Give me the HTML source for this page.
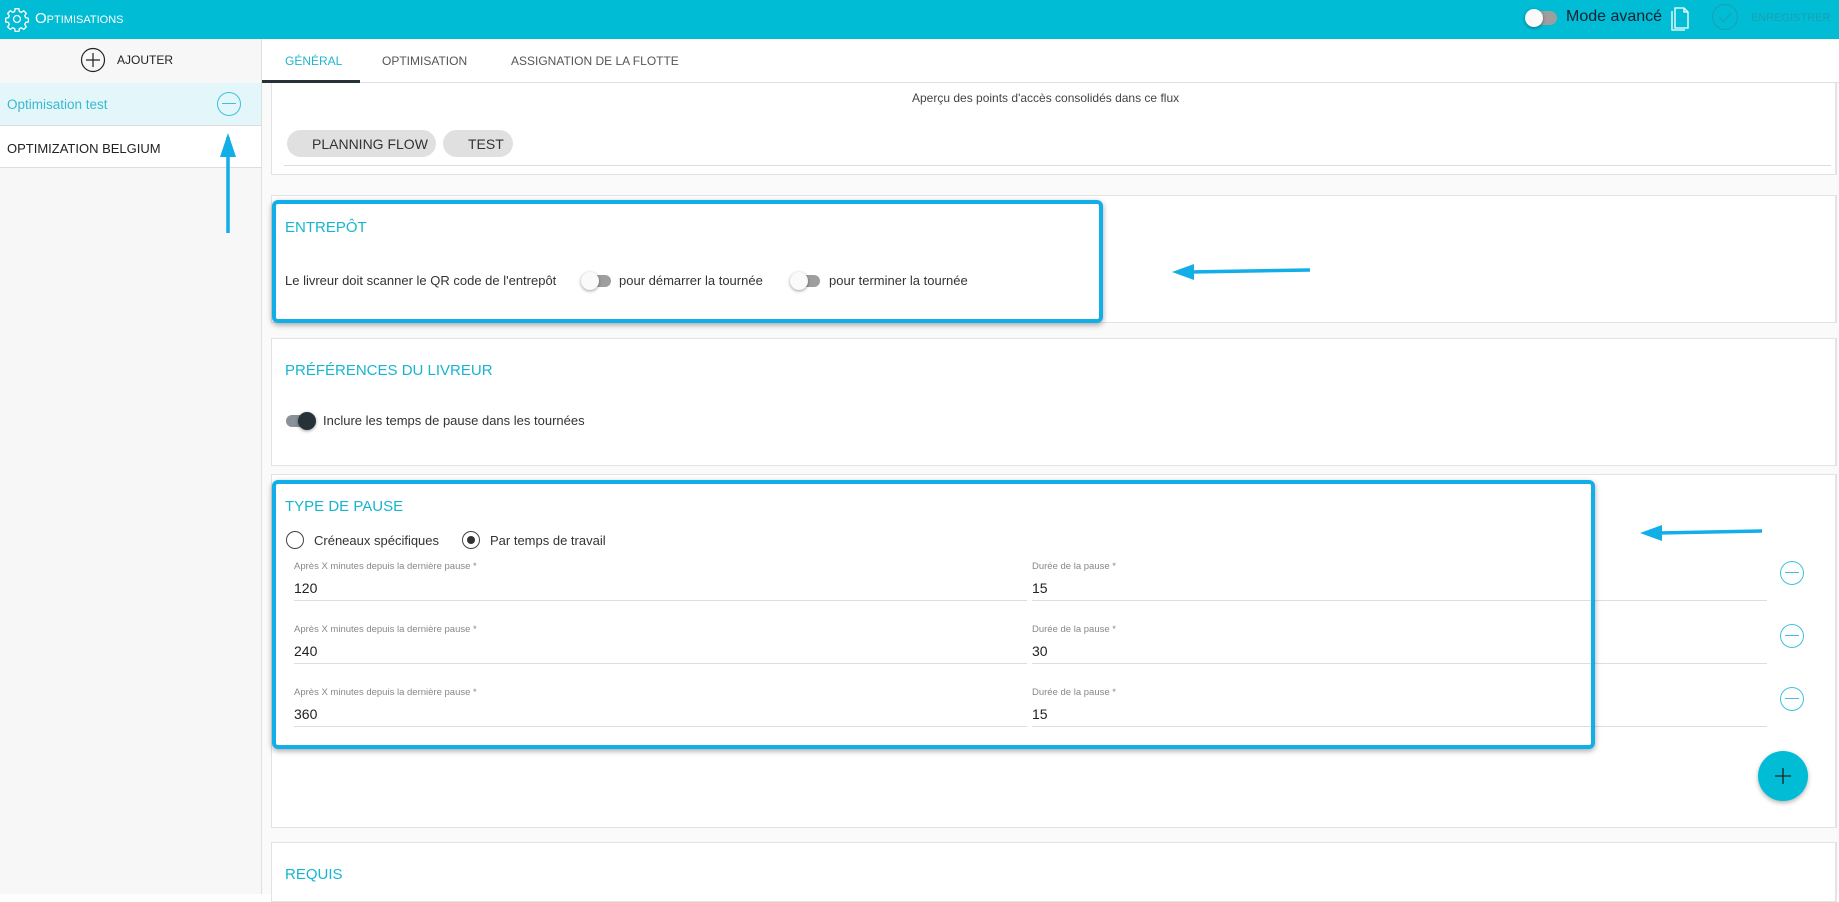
<!DOCTYPE html>
<html><head><meta charset="utf-8"><style>
*{box-sizing:border-box;margin:0;padding:0}
body{width:1839px;height:894px;overflow:hidden;background:#fff;font-family:"Liberation Sans",Arial,sans-serif;position:relative;color:#222}
.a{position:absolute}
.top{left:0;top:0;width:1839px;height:39px;background:#00bcd4}
.side{left:0;top:39px;width:262px;height:855px;background:#f7f7f7;border-right:1px solid #e0e0e0}
.main{left:262px;top:39px;width:1577px;height:855px;background:#fafafa}
.card{background:#fff;border:1px solid #e3e3e3;border-right:2px solid #e3e3e3}
.title{color:#16b5cf;font-size:15px}
.t{font-size:13px;color:#333}
.lbl{font-size:9.5px;color:#888}
.val{font-size:14px;color:#222}
.ln{height:1px;background:#ddd}
.hl{border:4px solid #12aee8;border-radius:6px;box-shadow:0 2px 6px rgba(0,0,0,.35)}
.mc{width:24px;height:24px;border:1.2px solid #3cc3db;border-radius:50%}
.mc:after{content:"";position:absolute;left:4px;right:4px;top:10px;height:1.2px;background:#3cc3db}
.tg{width:28px;height:12px;border-radius:6px;background:#9e9e9e}
.tg i{position:absolute;top:-3px;width:18px;height:18px;border-radius:50%;background:#fafafa;box-shadow:0 1px 3px rgba(0,0,0,.4)}
</style></head><body>
<div class="a top">
  <svg class="a" style="left:4px;top:6px" width="26" height="26" viewBox="0 0 24 24" fill="none" stroke="#fff" stroke-width="1.2"><circle cx="12" cy="12" r="3.2"/><path d="M10.3 2.5h3.4l.5 2.6 1.8.8 2.2-1.5 2.4 2.4-1.5 2.2.8 1.8 2.6.5v3.4l-2.6.5-.8 1.8 1.5 2.2-2.4 2.4-2.2-1.5-1.8.8-.5 2.6h-3.4l-.5-2.6-1.8-.8-2.2 1.5-2.4-2.4 1.5-2.2-.8-1.8-2.6-.5v-3.4l2.6-.5.8-1.8-1.5-2.2 2.4-2.4 2.2 1.5 1.8-.8z"/></svg>
  <div class="a" style="left:35px;top:10px;color:#fff;font-size:15px">O<span style="font-size:11px">PTIMISATIONS</span></div>
  <div class="a tg" style="left:1527px;top:11px;width:30px;height:14px;border-radius:7px"><i style="left:-2px;top:-2px"></i></div>
  <div class="a" style="left:1566px;top:8px;font-size:16px;color:#123">Mode avancé</div>
  <svg class="a" style="left:1668px;top:5px" width="24" height="28" viewBox="0 0 24 28" fill="none" stroke="#fff" stroke-width="1.3"><path d="M4 6v19h13"/><path d="M7 3h9l4 4v16H7z"/><path d="M16 3v4h4"/></svg>
  <svg class="a" style="left:1711px;top:3px" width="28" height="28" viewBox="0 0 28 28" fill="none" stroke="#1a9fb2" stroke-width="1"><circle cx="14" cy="14" r="12.5"/><path d="M8.5 14.5l4 4 7.5-8"/></svg>
  <div class="a" style="left:1751px;top:12px;font-size:11px;color:#1a9fb2">ENREGISTRER</div>
</div>
<div class="a side">
  <svg class="a" style="left:80px;top:8px" width="26" height="26" viewBox="0 0 26 26" fill="none" stroke="#222" stroke-width="1.2"><circle cx="13" cy="13" r="11.5"/><path d="M13 6v14M6 13h14"/></svg>
  <div class="a" style="left:117px;top:14px;font-size:12px;color:#222">AJOUTER</div>
  <div class="a" style="left:0;top:44px;width:261px;height:43px;background:#e3f6fa;border-bottom:1px solid #ddd"></div>
  <div class="a" style="left:7px;top:58px;font-size:13.5px;color:#3cb8cf">Optimisation test</div>
  <div class="a mc" style="left:217px;top:53px"></div>
  <div class="a" style="left:0;top:87px;width:261px;height:42px;background:#fff;border-bottom:1px solid #ddd"></div>
  <div class="a" style="left:7px;top:102px;font-size:13px;color:#222">OPTIMIZATION BELGIUM</div>
  <svg class="a" style="left:218px;top:90px" width="20" height="106" viewBox="0 0 20 106"><path d="M10 8 L10 104" stroke="#12aee8" stroke-width="3.5"/><path d="M2 28 L10 4 L18 28 Z" fill="#12aee8"/></svg>
</div>
<div class="a main">
  <div class="a" style="left:0;top:0;width:1577px;height:44px;background:#fff;border-bottom:1px solid #e0e0e0"></div>
  <div class="a" style="left:23px;top:15px;font-size:12px;color:#20b5cf">GÉNÉRAL</div>
  <div class="a" style="left:0;top:41px;width:98px;height:3px;background:#263238"></div>
  <div class="a" style="left:120px;top:15px;font-size:12px;color:#555">OPTIMISATION</div>
  <div class="a" style="left:249px;top:15px;font-size:12px;color:#555">ASSIGNATION DE LA FLOTTE</div>
  <div class="a card" style="left:9px;top:44px;width:1566px;height:92px;border-top:none"></div>
  <div class="a" style="left:650px;top:52px;font-size:12px;color:#444">Aperçu des points d'accès consolidés dans ce flux</div>
  <div class="a" style="left:25px;top:91px;width:149px;height:27px;border-radius:14px;background:#e0e0e0;font-size:14px;color:#333;padding:6px 0 0 25px">PLANNING FLOW</div>
  <div class="a" style="left:181px;top:91px;width:70px;height:27px;border-radius:14px;background:#e0e0e0;font-size:14px;color:#333;padding:6px 0 0 25px">TEST</div>
  <div class="a ln" style="left:22px;top:126px;width:1547px"></div>

  <div class="a card" style="left:9px;top:156px;width:1566px;height:128px"></div>
  <div class="a title" style="left:23px;top:180px">ENTREPÔT</div>
  <div class="a t" style="left:23px;top:234px">Le livreur doit scanner le QR code de l'entrepôt</div>
  <div class="a tg" style="left:321px;top:236px"><i style="left:-2px"></i></div>
  <div class="a t" style="left:357px;top:234px">pour démarrer la tournée</div>
  <div class="a tg" style="left:530px;top:236px"><i style="left:-2px"></i></div>
  <div class="a t" style="left:567px;top:234px">pour terminer la tournée</div>
  <div class="a hl" style="left:10px;top:161px;width:831px;height:123px"></div>
  <svg class="a" style="left:908px;top:223px" width="142" height="20" viewBox="0 0 142 20"><path d="M20 10 L140 8" stroke="#12aee8" stroke-width="3.5"/><path d="M2 10 L24 2 L24 18 Z" fill="#12aee8"/></svg>

  <div class="a card" style="left:9px;top:299px;width:1566px;height:128px"></div>
  <div class="a title" style="left:23px;top:323px">PRÉFÉRENCES DU LIVREUR</div>
  <div class="a tg" style="left:24px;top:376px;background:#8a9298"><i style="left:12px;background:#263238"></i></div>
  <div class="a t" style="left:61px;top:374px">Inclure les temps de pause dans les tournées</div>

  <div class="a card" style="left:9px;top:435px;width:1566px;height:354px"></div>
  <div class="a title" style="left:23px;top:459px">TYPE DE PAUSE</div>
  <div class="a" style="left:24px;top:492px;width:18px;height:18px;border:1.5px solid #444;border-radius:50%"></div>
  <div class="a t" style="left:52px;top:494px">Créneaux spécifiques</div>
  <div class="a" style="left:200px;top:492px;width:18px;height:18px;border:1.5px solid #444;border-radius:50%"><div class="a" style="left:3.5px;top:3.5px;width:8px;height:8px;border-radius:50%;background:#333"></div></div>
  <div class="a t" style="left:228px;top:494px">Par temps de travail</div>

  <div class="a lbl" style="left:32px;top:522px">Après X minutes depuis la dernière pause *</div>
  <div class="a val" style="left:32px;top:541px">120</div>
  <div class="a ln" style="left:32px;top:561px;width:733px"></div>
  <div class="a lbl" style="left:770px;top:522px">Durée de la pause *</div>
  <div class="a val" style="left:770px;top:541px">15</div>
  <div class="a ln" style="left:770px;top:561px;width:735px"></div>
  <div class="a mc" style="left:1518px;top:522px"></div>

  <div class="a lbl" style="left:32px;top:585px">Après X minutes depuis la dernière pause *</div>
  <div class="a val" style="left:32px;top:604px">240</div>
  <div class="a ln" style="left:32px;top:624px;width:733px"></div>
  <div class="a lbl" style="left:770px;top:585px">Durée de la pause *</div>
  <div class="a val" style="left:770px;top:604px">30</div>
  <div class="a ln" style="left:770px;top:624px;width:735px"></div>
  <div class="a mc" style="left:1518px;top:585px"></div>

  <div class="a lbl" style="left:32px;top:648px">Après X minutes depuis la dernière pause *</div>
  <div class="a val" style="left:32px;top:667px">360</div>
  <div class="a ln" style="left:32px;top:687px;width:733px"></div>
  <div class="a lbl" style="left:770px;top:648px">Durée de la pause *</div>
  <div class="a val" style="left:770px;top:667px">15</div>
  <div class="a ln" style="left:770px;top:687px;width:735px"></div>
  <div class="a mc" style="left:1518px;top:648px"></div>

  <div class="a hl" style="left:10px;top:441px;width:1323px;height:269px"></div>
  <svg class="a" style="left:1376px;top:484px" width="126" height="20" viewBox="0 0 126 20"><path d="M20 10 L124 8" stroke="#12aee8" stroke-width="3.5"/><path d="M2 10 L24 2 L24 18 Z" fill="#12aee8"/></svg>
  <div class="a" style="left:1496px;top:712px;width:50px;height:50px;border-radius:50%;background:#00bcd4;box-shadow:0 2px 5px rgba(0,0,0,.3)"></div>
  <svg class="a" style="left:1511px;top:727px" width="20" height="20" viewBox="0 0 20 20"><path d="M10 2v16M2 10h16" stroke="#222" stroke-width="1.3"/></svg>

  <div class="a card" style="left:9px;top:803px;width:1566px;height:60px"></div>
  <div class="a title" style="left:23px;top:827px">REQUIS</div>
</div>
</body></html>
